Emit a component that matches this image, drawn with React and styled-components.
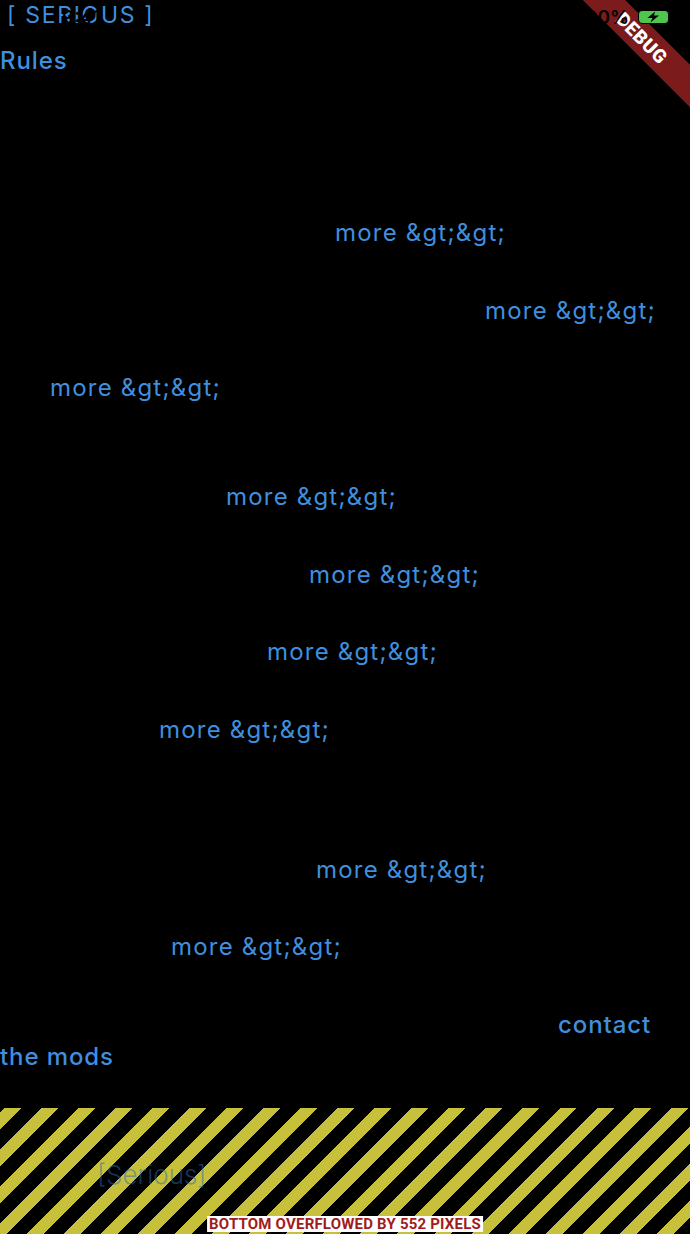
import React from "react";
import styled, { createGlobalStyle } from "styled-components";

const Global = createGlobalStyle`
  html, body { margin: 0; padding: 0; background: #000; }
  body { overflow: hidden; }
  #root { width: 690px; height: 1234px; }
`;

const BLUE = "#3f8fdf";

const Page = styled.div`
  position: relative;
  width: 690px;
  height: 1234px;
  background: #000;
  overflow: hidden;
  display: flex;
  flex-direction: column;
  font-family: Inter, "Noto Sans", sans-serif;
`;

const Header = styled.div`
  height: 30px;
  display: flex;
  align-items: center;
  padding: 0 0 0 7px;
`;

const Title = styled.div`
  color: ${BLUE};
  font-size: 23px;
  font-weight: 400;
  letter-spacing: 1.7px;
  line-height: 30px;
`;

const StatusBar = styled.div`
  position: absolute;
  top: 0;
  left: 0;
  right: 0;
  height: 34px;
  display: flex;
  align-items: center;
  justify-content: space-between;
  padding: 0 18px 0 62px;
  color: #000;
  font-family: Inter, "Noto Sans", sans-serif;
  font-size: 19px;
  font-weight: 600;
  z-index: 3;
  pointer-events: none;
`;

const StatusRight = styled.div`
  display: flex;
  align-items: center;
  gap: 9px;
`;

const Content = styled.div`
  flex: 1;
  display: flex;
  flex-direction: column;
`;

const Line = styled.div`
  margin-top: ${(p) => p.$top}px;
  padding-left: ${(p) => p.$left}px;
  height: 26px;
  line-height: 26px;
  color: ${BLUE};
  font-size: 24px;
  font-weight: ${(p) => (p.$bold ? 500 : 400)};
  letter-spacing: ${(p) => (p.$bold ? 0.9 : 1.2)}px;
  white-space: nowrap;
`;

const Hazard = styled.div`
  position: relative;
  height: 126px;
  flex-shrink: 0;
  background: repeating-linear-gradient(
    135deg,
    #000 0px,
    #000 3px,
    #c6c03a 3px,
    #c6c03a 15px,
    #000 15px,
    #000 26.2px
  );
  display: flex;
  align-items: center;
`;

const Ghost = styled.div`
  margin: 6px 0 0 97px;
  font-size: 26px;
  font-weight: 300;
  color: rgba(45, 105, 180, 0.5);
`;

const OverflowLabel = styled.div`
  position: absolute;
  bottom: 2px;
  left: 50%;
  transform: translateX(-50%);
  background: #fff;
  color: #a11c1c;
  font-family: Roboto, "Liberation Sans", sans-serif;
  font-weight: 700;
  font-size: 15px;
  letter-spacing: 0.2px;
  line-height: 16px;
  padding: 0 2px;
  white-space: nowrap;
`;

const Banner = styled.div`
  position: absolute;
  top: 23px;
  right: -47px;
  width: 190px;
  height: 30px;
  transform: rotate(45deg);
  background: #7b1b1b;
  color: #fff;
  font-family: Roboto, "Liberation Sans", sans-serif;
  font-weight: 900;
  font-size: 19px;
  letter-spacing: 0.5px;
  display: flex;
  align-items: center;
  justify-content: center;
  z-index: 2;
`;

function BatteryIcon() {
  return (
    <svg width="34" height="14" viewBox="0 0 34 14">
      <rect x="0.5" y="0.5" width="30" height="13" rx="3.5" fill="#4fc54f" stroke="#000" />
      <rect x="31.5" y="4.5" width="2" height="5" rx="1" fill="#000" />
      <path d="M17 1.5 L9.5 8 H14.5 L12.5 12.5 L21 5.5 H16 Z" fill="#000" />
    </svg>
  );
}

const centers = [
  { t: "Rules", y: 61, x: 0, bold: true },
  { t: "more &gt;&gt;", y: 233, x: 335 },
  { t: "more &gt;&gt;", y: 311, x: 485 },
  { t: "more &gt;&gt;", y: 388, x: 50 },
  { t: "more &gt;&gt;", y: 497, x: 226 },
  { t: "more &gt;&gt;", y: 575, x: 309 },
  { t: "more &gt;&gt;", y: 652, x: 267 },
  { t: "more &gt;&gt;", y: 730, x: 159 },
  { t: "more &gt;&gt;", y: 870, x: 316 },
  { t: "more &gt;&gt;", y: 947, x: 171 },
  { t: "contact", y: 1025, x: 558, bold: true },
  { t: "the mods", y: 1057, x: 0, bold: true },
];

export default function App() {
  let prev = 30;
  const lines = centers.map((c, i) => {
    const top = c.y - 13 - prev;
    prev = c.y + 13;
    return (
      <Line key={i} $top={top} $left={c.x} $bold={c.bold}>
        {c.t}
      </Line>
    );
  });
  return (
    <Page>
      <Global />
      <Header>
        <Title>[ SERIOUS ]</Title>
      </Header>
      <Content>{lines}</Content>
      <Hazard>
        <Ghost>[Serious]</Ghost>
        <OverflowLabel>BOTTOM OVERFLOWED BY 552 PIXELS</OverflowLabel>
      </Hazard>
      <Banner>DEBUG</Banner>
      <StatusBar>
        <span>9:41</span>
        <StatusRight>
          <span>100%</span>
          <BatteryIcon />
        </StatusRight>
      </StatusBar>
    </Page>
  );
}
